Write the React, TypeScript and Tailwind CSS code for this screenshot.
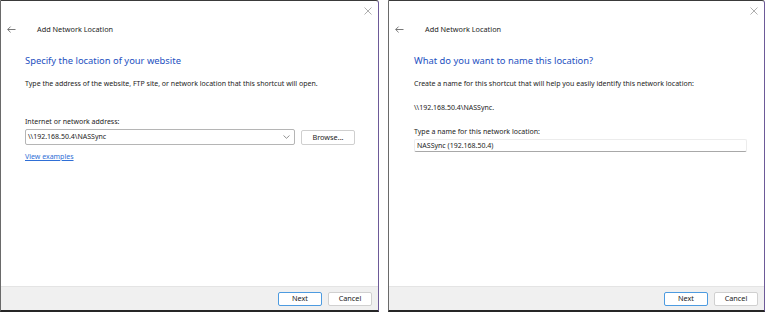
import React from "react";

const font = { fontFamily: '"Noto Sans", "Open Sans", sans-serif' };

function CloseX() {
  return (
    <svg width="8" height="8" viewBox="0 0 8 8" className="block">
      <path d="M0.5 0.5 L7.5 7.5 M7.5 0.5 L0.5 7.5" stroke="#9a9a9a" strokeWidth="0.8" fill="none" />
    </svg>
  );
}

function BackArrow() {
  return (
    <svg width="9" height="7" viewBox="0 0 9 7" className="block">
      <path d="M8.5 3.5 H0.8 M3.6 0.6 L0.7 3.5 L3.6 6.4" stroke="#555" strokeWidth="0.8" fill="none" />
    </svg>
  );
}

function Chevron() {
  return (
    <svg width="7" height="4" viewBox="0 0 7 4" className="block">
      <path d="M0.5 0.5 L3.5 3.3 L6.5 0.5" stroke="#777" strokeWidth="0.8" fill="none" />
    </svg>
  );
}

function TitleBar() {
  return (
    <>
      <div className="h-[19px] flex justify-end items-center pr-[6px]">
        <CloseX />
      </div>
      <div className="h-[18px] flex items-center pl-[6px]">
        <BackArrow />
        <span className="ml-[21px] text-[7.3px] leading-[10px] text-[#1c1c1c]">Add Network Location</span>
      </div>
    </>
  );
}

function Footer() {
  return (
    <div className="h-[24px] bg-[#f0f0f0] border-t border-[#e4e4e4] flex items-center justify-end gap-[6px] pr-[6px]">
      <div className="w-[44px] h-[14px] bg-white border border-[#4d9be0] rounded-[2px] flex items-center justify-center text-[7.3px] text-[#1c1c1c]">
        Next
      </div>
      <div className="w-[44px] h-[14px] bg-white border border-[#d0d0d0] rounded-[2px] flex items-center justify-center text-[7.3px] text-[#1c1c1c]">
        Cancel
      </div>
    </div>
  );
}

const win =
  "flex flex-col h-[312px] bg-white border-l border-t border-r border-b-2 border-l-[#6a6a6a] border-t-[#3a3a3a] border-r-[#6d5a98] border-b-[#262626] rounded-tr-[3px]";

export default function App() {
  return (
    <div className="w-[768px] h-[313px] bg-white flex items-start gap-[9px]" style={font}>
      <div className={"w-[379px] " + win}>
        <TitleBar />
        <div className="pl-[24px] flex flex-col">
          <div className="mt-[16px] text-[9.4px] leading-[14px] text-[#2450bf]">Specify the location of your website</div>
          <div className="mt-[11px] text-[7px] leading-[10px] text-[#1c1c1c]">
            Type the address of the website, FTP site, or network location that this shortcut will open.
          </div>
          <div className="mt-[28px] text-[7px] leading-[10px] text-[#1c1c1c]">Internet or network address:</div>
          <div className="mt-[2px] flex items-center gap-[6px]">
            <div className="w-[270px] h-[16px] border border-[#b5b5b5] rounded-[2px] flex items-center justify-between pl-[2px] pr-[4px]">
              <span className="text-[7px] leading-[10px] text-[#1c1c1c]">\\192.168.50.4\NASSync</span>
              <Chevron />
            </div>
            <div className="w-[54px] h-[15px] border border-[#cfcfcf] rounded-[2px] flex items-center justify-center text-[7.3px] text-[#1c1c1c]">
              Browse...
            </div>
          </div>
          <div className="mt-[7px] text-[7px] leading-[10px] text-[#2f6fd6] underline">View examples</div>
        </div>
        <div className="flex-1" />
        <Footer />
      </div>
      <div className={"w-[377px] " + win}>
        <TitleBar />
        <div className="pl-[25px] flex flex-col">
          <div className="mt-[16px] text-[9.4px] leading-[14px] text-[#2450bf]">What do you want to name this location?</div>
          <div className="mt-[11px] text-[7px] leading-[10px] text-[#1c1c1c]">
            Create a name for this shortcut that will help you easily identify this network location:
          </div>
          <div className="mt-[14px] text-[7px] leading-[10px] text-[#1c1c1c]">\\192.168.50.4\NASSync.</div>
          <div className="mt-[14px] text-[7px] leading-[10px] text-[#1c1c1c]">Type a name for this network location:</div>
          <div className="mt-[2px] w-[333px] h-[13px] border border-[#ececec] border-b-[#a8a8a8] rounded-[2px] flex items-center pl-[2px]">
            <span className="text-[7px] leading-[10px] text-[#1c1c1c]">NASSync (192.168.50.4)</span>
          </div>
        </div>
        <div className="flex-1" />
        <Footer />
      </div>
    </div>
  );
}
